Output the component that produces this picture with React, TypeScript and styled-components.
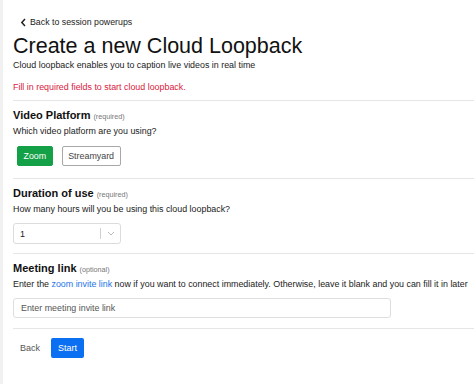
import React from "react";
import styled, { createGlobalStyle } from "styled-components";

const Global = createGlobalStyle`
  html, body { margin: 0; padding: 0; background: #fff; }
  body { font-family: "Liberation Sans", Arial, sans-serif; color: #1a1a1a; }
`;

const Page = styled.div`
  display: flex;
  min-height: 384px;
`;

const Gutter = styled.div`
  width: 3px;
  background: #f1f1f1;
  flex: none;
`;

const Main = styled.main`
  flex: 1;
  padding: 16px 0 0 10px;
`;

const BackLink = styled.a`
  display: flex;
  align-items: center;
  gap: 3px;
  margin-left: 7px;
  font-size: 8.8px;
  color: #222;
  text-decoration: none;
  line-height: 12px;
`;

const Title = styled.h1`
  margin: 5px 0 0;
  font-size: 21.5px;
  font-weight: 400;
  line-height: 26px;
  color: #111;
`;

const Text = styled.p`
  margin: 0;
  font-size: 8.9px;
  line-height: 12px;
  color: #222;
`;

const ErrorText = styled(Text)`
  color: #d8213e;
  margin: 10px 0 7px;
`;

const Divider = styled.hr`
  border: none;
  border-top: 1px solid #e6e6e6;
  margin: 0;
`;

const Section = styled.section<{ $bottom: number }>`
  padding: 6px 0 ${(p) => p.$bottom}px;
  border-bottom: 1px solid #e6e6e6;
`;

const Heading = styled.h2`
  margin: 0;
  font-size: 11px;
  font-weight: 700;
  line-height: 16px;
  color: #111;
`;

const Hint = styled.span`
  font-size: 7.2px;
  font-weight: 400;
  color: #777;
  margin-left: 3px;
`;

const ButtonRow = styled.div`
  display: flex;
  gap: 9px;
  padding: 9px 0 0 4px;
`;

const Choice = styled.button<{ $active?: boolean }>`
  height: 20px;
  padding: 0 5.5px;
  font-family: inherit;
  font-size: 8.9px;
  border-radius: 2px;
  border: 1px solid ${(p) => (p.$active ? "#14a047" : "#a8a8a8")};
  background: ${(p) => (p.$active ? "#14a047" : "#fff")};
  color: ${(p) => (p.$active ? "#fff" : "#444")};
`;

const Select = styled.div`
  display: flex;
  align-items: center;
  width: 108px;
  height: 21px;
  box-sizing: border-box;
  border: 1px solid #dcdcdc;
  border-radius: 3px;
  margin-top: 8px;
`;

const SelectValue = styled.span`
  flex: 1;
  padding-left: 6px;
  font-size: 9px;
  color: #222;
`;

const SelectSep = styled.span`
  width: 1px;
  height: 11px;
  background: #d0d0d0;
`;

const SelectArrow = styled.span`
  width: 19px;
  display: flex;
  justify-content: center;
  align-items: center;
`;

const Link = styled.a`
  color: #1c74e6;
  text-decoration: none;
`;

const Input = styled.input`
  display: block;
  width: 378px;
  height: 20px;
  box-sizing: border-box;
  border: 1px solid #dedede;
  border-radius: 3px;
  padding: 0 7px;
  font-family: inherit;
  font-size: 8.9px;
  margin-top: 8px;
  &::placeholder { color: #555; }
`;

const Footer = styled.div`
  display: flex;
  align-items: center;
  gap: 11px;
  padding: 9px 0 0 7px;
`;

const GhostButton = styled.button`
  border: none;
  background: none;
  padding: 0;
  font-family: inherit;
  font-size: 9px;
  color: #555;
`;

const PrimaryButton = styled.button`
  height: 20px;
  padding: 0 7px;
  border: none;
  border-radius: 2px;
  background: #0a6ff0;
  color: #fff;
  font-family: inherit;
  font-size: 9px;
`;

export default function App() {
  return (
    <>
      <Global />
      <Page>
        <Gutter />
        <Main>
          <BackLink href="#">
            <svg width="7" height="9" viewBox="0 0 7 9">
              <path d="M5 1 L1.8 4.5 L5 8" fill="none" stroke="#222" strokeWidth="1.5" />
            </svg>
            Back to session powerups
          </BackLink>
          <Title>Create a new Cloud Loopback</Title>
          <Text>Cloud loopback enables you to caption live videos in real time</Text>
          <ErrorText>Fill in required fields to start cloud loopback.</ErrorText>
          <Divider />
          <Section $bottom={12}>
            <Heading>
              Video Platform<Hint>(required)</Hint>
            </Heading>
            <Text>Which video platform are you using?</Text>
            <ButtonRow>
              <Choice $active>Zoom</Choice>
              <Choice>Streamyard</Choice>
            </ButtonRow>
          </Section>
          <Section $bottom={9}>
            <Heading>
              Duration of use<Hint>(required)</Hint>
            </Heading>
            <Text>How many hours will you be using this cloud loopback?</Text>
            <Select>
              <SelectValue>1</SelectValue>
              <SelectSep />
              <SelectArrow>
                <svg width="8" height="5" viewBox="0 0 8 5">
                  <path d="M1 1 L4 4 L7 1" fill="none" stroke="#b8b8b8" strokeWidth="1" />
                </svg>
              </SelectArrow>
            </Select>
          </Section>
          <Section $bottom={10}>
            <Heading>
              Meeting link<Hint>(optional)</Hint>
            </Heading>
            <Text>
              Enter the <Link href="#">zoom invite link</Link> now if you want to connect immediately. Otherwise, leave it blank and you can fill it in later
            </Text>
            <Input placeholder="Enter meeting invite link" />
          </Section>
          <Footer>
            <GhostButton>Back</GhostButton>
            <PrimaryButton>Start</PrimaryButton>
          </Footer>
        </Main>
      </Page>
    </>
  );
}
